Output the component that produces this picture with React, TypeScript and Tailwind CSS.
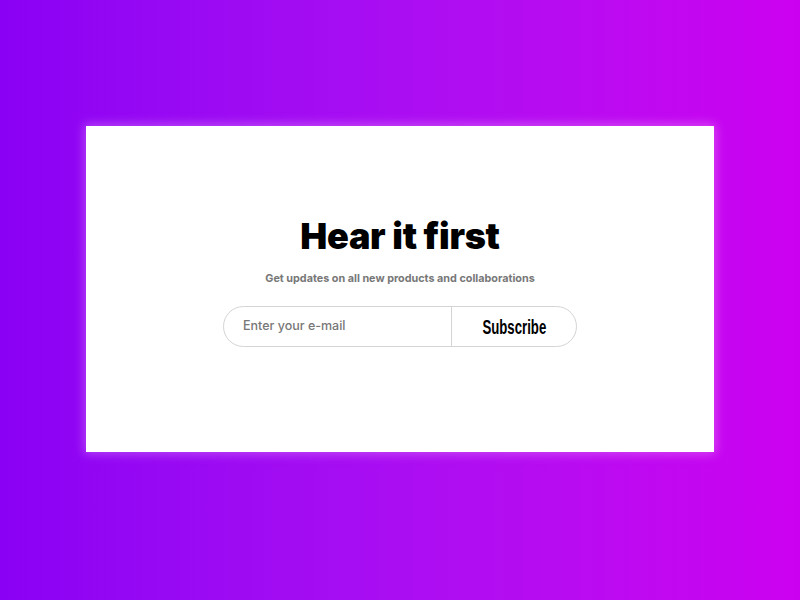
export default function App() {
  return (
    <div className="w-[800px] h-[600px] bg-gradient-to-r from-[#8a00f4] to-[#cc00f0] flex justify-center pt-[126px] font-['Inter','Liberation_Sans',sans-serif]">
      <div className="w-[628px] h-[326px] bg-white shadow-[0_0_10px_2px_rgba(255,190,255,0.35)] flex flex-col items-center pt-[90px]">
        <h1 className="text-[36px] leading-[40px] font-black text-black tracking-[-0.3px]">
          Hear it first
        </h1>
        <p className="mt-[16px] text-[10.8px] leading-[14px] font-bold text-[#777]">
          Get updates on all new products and collaborations
        </p>
        <form className="mt-[20px] w-[354px] h-[41px] rounded-full border border-[#d4d4d4] flex overflow-hidden">
          <input
            type="email"
            placeholder="Enter your e-mail"
            className="flex-1 min-w-0 pl-[19px] text-[12.5px] font-medium text-[#333] placeholder:text-[#777] outline-none"
          />
          <button
            type="button"
            className="w-[125px] border-l border-[#d4d4d4] flex items-center justify-center"
          >
            <span className="inline-block scale-x-[0.66] scale-y-[1.05] text-[20px] font-bold text-black font-['Liberation_Sans',sans-serif]">
              Subscribe
            </span>
          </button>
        </form>
      </div>
    </div>
  );
}
